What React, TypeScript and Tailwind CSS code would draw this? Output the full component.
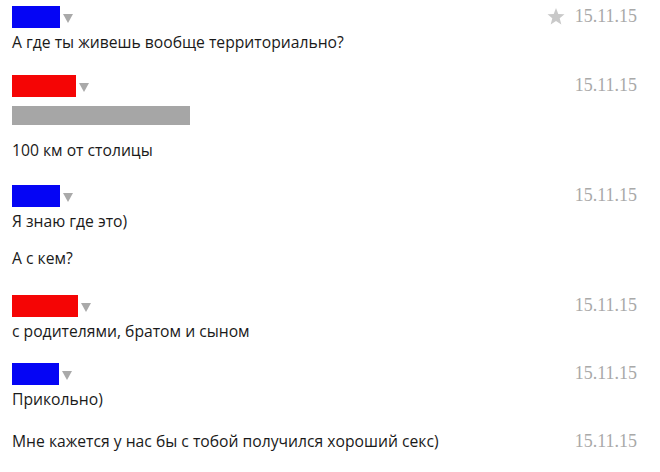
import React from 'react';

type Msg = { text?: string; date?: string; bar?: boolean };
type Group = { color: string; w: number; date: string; star?: boolean; mt: number; msgs: Msg[] };

const groups: Group[] = [
  { color: 'blue', w: 48, date: '15.11.15', star: true, mt: 6, msgs: [{ text: 'А где ты живешь вообще территориально?' }] },
  { color: 'red', w: 64, date: '15.11.15', mt: 23, msgs: [{ bar: true }, { text: '100 км от столицы' }] },
  { color: 'blue', w: 48, date: '15.11.15', mt: 25, msgs: [{ text: 'Я знаю где это)' }, { text: 'А с кем?' }] },
  { color: 'red', w: 66, date: '15.11.15', mt: 27, msgs: [{ text: 'с родителями, братом и сыном' }] },
  { color: 'blue', w: 47, date: '15.11.15', mt: 22, msgs: [{ text: 'Прикольно)' }, { text: 'Мне кажется у нас бы с тобой получился хороший секс)', date: '15.11.15' }] },
];

const DateLabel = ({ children }: { children: React.ReactNode }) => (
  <span className="text-[18px] leading-5 text-[#a9a9a9] font-['Liberation_Serif',serif]">{children}</span>
);

const Arrow = () => (
  <svg width="10" height="9" viewBox="0 0 10 9" className="mt-[2px]">
    <polygon points="0,0 10,0 5,9" fill="#a9a9a9" />
  </svg>
);

const Star = () => (
  <svg width="18" height="17" viewBox="0 0 24 23">
    <polygon
      points="12,0 15.1,8 23.5,8.4 17,13.8 19.2,22.3 12,17.6 4.8,22.3 7,13.8 0.5,8.4 8.9,8"
      fill="#c9c9c9"
    />
  </svg>
);

export default function App() {
  return (
    <div className="w-[660px] h-[472px] bg-white overflow-hidden pl-3 pr-[23px] text-[15.7px] text-[#1a1a1a] font-['Open_Sans','Noto_Sans',sans-serif]">
      {groups.map((g, gi) => (
        <div key={gi} style={{ marginTop: g.mt }}>
          <div className="flex items-center justify-between h-[22px]">
            <div className="flex items-center gap-[3px]">
              <div
                className={g.color === 'blue' ? 'h-[22px] bg-[#0505f5]' : 'h-[22px] bg-[#f50505]'}
                style={{ width: g.w }}
              />
              <Arrow />
            </div>
            <div className="flex items-center gap-[10px] -mt-[2px]">
              {g.star && <Star />}
              <DateLabel>{g.date}</DateLabel>
            </div>
          </div>
          <div className="flex flex-col">
            {g.msgs.map((m, mi) =>
              m.bar ? (
                <div key={mi} className="mt-[9px] h-[19px] w-[178px] bg-[#a6a6a6]" />
              ) : (
                <div
                  key={mi}
                  className={`flex items-center justify-between leading-5 ${
                    g.msgs[mi - 1]?.bar ? 'mt-[15px]' : mi === 0 ? 'mt-1' : m.date ? 'mt-[22px]' : 'mt-[17px]'
                  }`}
                >
                  <span>{m.text}</span>
                  {m.date && <DateLabel>{m.date}</DateLabel>}
                </div>
              )
            )}
          </div>
        </div>
      ))}
    </div>
  );
}
